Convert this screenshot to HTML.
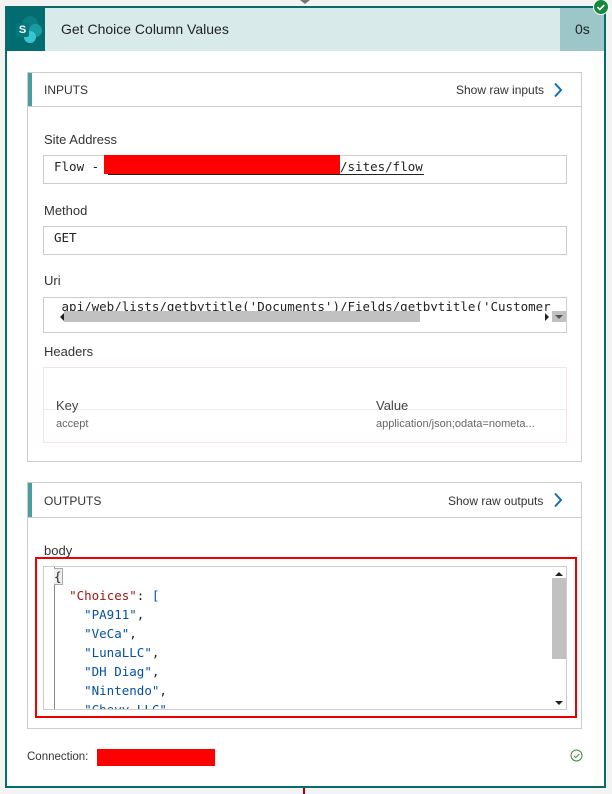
<!DOCTYPE html>
<html><head><meta charset="utf-8">
<style>
*{margin:0;padding:0;box-sizing:border-box}
body{width:612px;height:794px;background:#f3f3f3;position:relative;overflow:hidden;font-family:"Liberation Sans",sans-serif;color:#333}
.a{position:absolute}
.lbl{font-size:13px;color:#333}
.box{border:1px solid #ccc;background:#fff}
.mono{font-family:"DejaVu Sans Mono","Liberation Mono",monospace;font-size:12.5px;color:#222}
.c{position:absolute;border-radius:50%}
</style></head><body>
<div class="a" style="left:300px;top:0;width:10px;height:4px;background:#777;clip-path:polygon(0 0,100% 0,50% 100%)"></div>
<div class="a" style="left:5px;top:6px;width:601px;height:782px;border:2px solid #0b6a6c;background:#fff"></div>
<div class="a" style="left:7px;top:8px;width:38px;height:43px;background:#036c70"></div>
<div class="a" style="left:45px;top:8px;width:515px;height:43px;background:#d9eaeb"></div>
<div class="a" style="left:560px;top:8px;width:44px;height:43px;background:#9cc6c8"></div>
<div class="c" style="left:22px;top:16px;width:16px;height:16px;background:#0a7e83"></div>
<div class="c" style="left:29px;top:24px;width:13px;height:13px;background:#1a9ba1"></div>
<div class="c" style="left:24px;top:31px;width:12px;height:12px;background:#37c6d0"></div>
<div class="a" style="left:16px;top:23px;width:13px;height:14px;background:#03787c;border-radius:2px;color:#fff;font-size:11px;font-weight:bold;text-align:center;line-height:14px">S</div>
<div class="a" style="left:61px;top:21px;font-size:14px;color:#222">Get Choice Column Values</div>
<div class="a" style="left:575px;top:21px;font-size:14px;color:#222">0s</div>
<svg class="a" style="left:592px;top:0" width="18" height="16" viewBox="0 0 18 16"><circle cx="9" cy="7" r="7.5" fill="#13883a" stroke="#fff" stroke-width="1"/><path d="M5.5 7.2l2.3 2.3 4.5-4.5" stroke="#fff" stroke-width="1.6" fill="none"/></svg>

<div class="a" style="left:27px;top:72px;width:555px;height:390px;border:1px solid #ccc"></div>
<div class="a" style="left:28px;top:73px;width:4px;height:34px;background:#4a9ea0"></div>
<div class="a" style="left:28px;top:106px;width:553px;height:1px;background:#ccc"></div>
<div class="a lbl" style="left:44px;top:83px;font-size:12px">INPUTS</div>
<div class="a lbl" style="left:456px;top:83px;font-size:12px">Show raw inputs</div>
<svg class="a" style="left:553px;top:82px" width="10" height="16"><path d="M2 1.5l6 6.5-6 6.5" stroke="#0f6cbd" stroke-width="2" fill="none"/></svg>

<div class="a lbl" style="left:44px;top:132px">Site Address</div>
<div class="a box" style="left:43px;top:155px;width:524px;height:29px"></div>
<div class="a mono" style="left:54px;top:159px">Flow -</div>
<div class="a" style="left:104px;top:155px;width:236px;height:19px;background:#f00"></div>
<div class="a mono" style="left:340px;top:159px">/sites/flow</div>
<div class="a" style="left:108px;top:174px;width:316px;height:1px;background:#222"></div>

<div class="a lbl" style="left:44px;top:203px">Method</div>
<div class="a box" style="left:43px;top:226px;width:524px;height:29px"></div>
<div class="a mono" style="left:54px;top:230px">GET</div>

<div class="a lbl" style="left:44px;top:273px">Uri</div>
<div class="a box" style="left:43px;top:297px;width:524px;height:36px;overflow:hidden"></div>
<div class="a mono" style="left:54px;top:299px;width:498px;overflow:hidden;white-space:nowrap">_api/web/lists/getbytitle('Documents')/Fields/getbytitle('Customer')</div>
<div class="a" style="left:44px;top:311px;width:508px;height:21px;background:#fff"></div>
<div class="a" style="left:64px;top:311px;width:356px;height:11px;background:#c1c1c1"></div>
<div class="a" style="left:552px;top:298px;width:14px;height:34px;background:#fff"></div>
<div class="a" style="left:552px;top:311px;width:14px;height:11px;background:#c1c1c1"></div>
<div class="a" style="left:56px;top:313px;width:0;height:0;border:4px solid transparent;border-right-color:#222"></div>
<div class="a" style="left:545px;top:313px;width:0;height:0;border:4px solid transparent;border-left-color:#222"></div>
<div class="a" style="left:555px;top:315px;width:0;height:0;border:4px solid transparent;border-top-color:#555"></div>

<div class="a lbl" style="left:44px;top:344px">Headers</div>
<div class="a" style="left:43px;top:367px;width:524px;height:76px;border:1px solid #f2e4e8"></div>
<div class="a" style="left:44px;top:409px;width:522px;height:1px;background:#eee"></div>
<div class="a lbl" style="left:56px;top:398px;font-size:13px;color:#444">Key</div>
<div class="a lbl" style="left:376px;top:398px;font-size:13px;color:#444">Value</div>
<div class="a" style="left:56px;top:418px;font-size:11px;color:#666">accept</div>
<div class="a" style="left:376px;top:418px;font-size:11px;color:#666">application/json;odata=nometa...</div>

<div class="a" style="left:27px;top:482px;width:555px;height:247px;border:1px solid #ccc"></div>
<div class="a" style="left:28px;top:483px;width:4px;height:34px;background:#4a9ea0"></div>
<div class="a" style="left:28px;top:517px;width:553px;height:1px;background:#ccc"></div>
<div class="a lbl" style="left:44px;top:494px;font-size:12px">OUTPUTS</div>
<div class="a lbl" style="left:448px;top:494px;font-size:12px">Show raw outputs</div>
<svg class="a" style="left:553px;top:492px" width="10" height="16"><path d="M2 1.5l6 6.5-6 6.5" stroke="#0f6cbd" stroke-width="2" fill="none"/></svg>
<div class="a lbl" style="left:44px;top:543px">body</div>
<div class="a" style="left:35px;top:557px;width:542px;height:161px;border:2px solid #e00"></div>
<div class="a box" style="left:43px;top:566px;width:524px;height:144px;overflow:hidden"></div>
<div class="a" style="left:54px;top:567px;width:1px;height:142px;background:#888"></div>
<div class="a mono" style="left:54px;top:567px;line-height:19px;height:142px;overflow:hidden;white-space:pre"><span style="background:#eee;outline:1px solid #aaa">{</span>
  <span style="color:#a31515">"Choices"</span>: <span style="color:#0451a5">[</span>
    <span style="color:#0451a5">"PA911"</span>,
    <span style="color:#0451a5">"VeCa"</span>,
    <span style="color:#0451a5">"LunaLLC"</span>,
    <span style="color:#0451a5">"DH Diag"</span>,
    <span style="color:#0451a5">"Nintendo"</span>,
    <span style="color:#0451a5">"Chevy LLC"</span>,</div>
<div class="a" style="left:552px;top:578px;width:14px;height:81px;background:#c1c1c1"></div>
<div class="a" style="left:555px;top:568px;width:0;height:0;border:4px solid transparent;border-bottom-color:#222"></div>
<div class="a" style="left:555px;top:701px;width:0;height:0;border:4px solid transparent;border-top-color:#222"></div>

<div class="a" style="left:27px;top:751px;font-size:11.5px;color:#333">Connection:</div>
<div class="a" style="left:97px;top:749px;width:118px;height:17px;background:#f00"></div>
<svg class="a" style="left:570px;top:749px" width="13" height="13"><circle cx="6.5" cy="6.5" r="5.5" stroke="#3a8a3a" fill="none"/><path d="M3.8 6.7l1.9 1.9 3.5-3.5" stroke="#3a8a3a" fill="none"/></svg>
<div class="a" style="left:303px;top:788px;width:2px;height:6px;background:#a00"></div>
</body></html>
